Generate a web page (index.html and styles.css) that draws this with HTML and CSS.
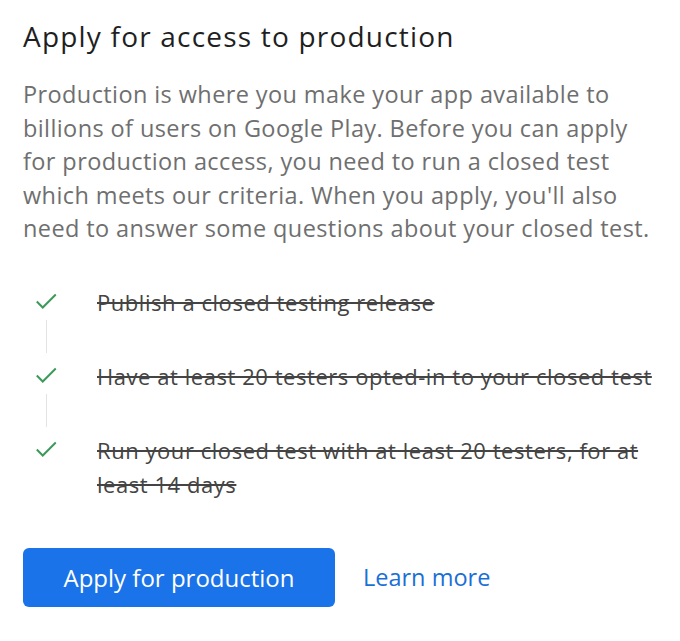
FILE: index.html
```html
<!DOCTYPE html>
<html>
<head>
<meta charset="utf-8">
<link rel="stylesheet" href="styles.css">
</head>
<body>
<div class="card">
  <h1 class="title">Apply for access to production</h1>
  <p class="desc">Production is where you make your app available to<br>billions of users on Google Play. Before you can apply<br>for production access, you need to run a closed test<br>which meets our criteria. When you apply, you'll also<br>need to answer some questions about your closed test.</p>
  <ul class="steps">
    <li class="step">
      <div class="rail">
        <svg class="check" viewBox="0 0 24 24" width="26" height="26"><path d="M3.5 12.5l5.5 5.5L21 6" fill="none" stroke="#3a9a5a" stroke-width="1.8"/></svg>
        <span class="line"></span>
      </div>
      <span class="label">Publish a closed testing release</span>
    </li>
    <li class="step">
      <div class="rail">
        <svg class="check" viewBox="0 0 24 24" width="26" height="26"><path d="M3.5 12.5l5.5 5.5L21 6" fill="none" stroke="#3a9a5a" stroke-width="1.8"/></svg>
        <span class="line"></span>
      </div>
      <span class="label">Have at least 20 testers opted-in to your closed test</span>
    </li>
    <li class="step last">
      <div class="rail">
        <svg class="check" viewBox="0 0 24 24" width="26" height="26"><path d="M3.5 12.5l5.5 5.5L21 6" fill="none" stroke="#3a9a5a" stroke-width="1.8"/></svg>
      </div>
      <span class="label">Run your closed test with at least 20 testers, for at<br>least 14 days</span>
    </li>
  </ul>
  <div class="actions">
    <button class="primary">Apply for production</button>
    <a class="link" href="#">Learn more</a>
  </div>
</div>
</body>
</html>
```
FILE: styles.css
```css
html, body {
  margin: 0;
  padding: 0;
  background: #ffffff;
}
.card {
  padding: 17px 0 0 23px;
  font-family: "Open Sans", Roboto, "Liberation Sans", sans-serif;
}
.title {
  margin: 0;
  font-size: 28px;
  font-weight: 400;
  color: #1f1f1f;
  line-height: 38px;
  letter-spacing: 1.2px;
  white-space: nowrap;
}
.desc {
  margin: 23px 0 0 0;
  font-size: 23.5px;
  line-height: 33.5px;
  color: #6f6f6f;
  letter-spacing: 0.4px;
  white-space: nowrap;
}
.steps {
  list-style: none;
  margin: 39px 0 0 0;
  padding: 0;
}
.step {
  display: flex;
  min-height: 74px;
}
.step.last {
  min-height: 0;
}
.rail {
  width: 74px;
  flex: none;
  display: flex;
  flex-direction: column;
  align-items: flex-start;
}
.check {
  margin: 3px 0 0 10px;
  display: block;
}
.line {
  display: block;
  width: 1px;
  flex: 1;
  background: #e3e3e3;
  margin: 6px 0 6px 23px;
}
.label {
  font-size: 22px;
  line-height: 34px;
  color: #444444;
  letter-spacing: 0.55px;
  text-decoration: line-through;
  text-decoration-thickness: 1.5px;
  white-space: nowrap;
}
.actions {
  display: flex;
  align-items: center;
  margin-top: 47px;
  gap: 28px;
}
.primary {
  width: 312px;
  height: 59px;
  border: none;
  border-radius: 6px;
  background: #1a73e8;
  color: #ffffff;
  font-family: "Open Sans", Roboto, sans-serif;
  font-size: 24px;
  font-weight: 500;
  padding: 0;
}
.link {
  color: #1a6fd6;
  text-decoration: none;
  font-family: "Open Sans", Roboto, sans-serif;
  font-size: 23.5px;
  font-weight: 500;
}
```
